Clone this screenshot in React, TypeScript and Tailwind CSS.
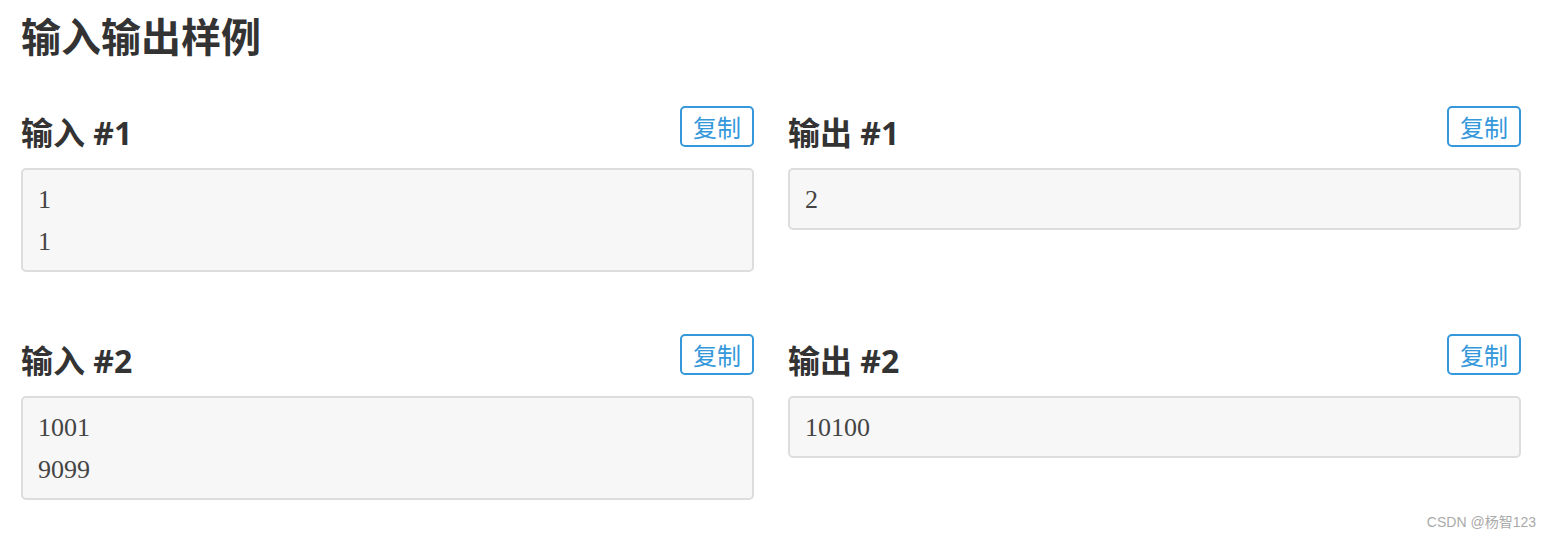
import React from "react";

interface Sample {
  label: string;
  lines: string[];
}

const rows: { input: Sample; output: Sample }[] = [
  { input: { label: "输入 #1", lines: ["1", "1"] }, output: { label: "输出 #1", lines: ["2"] } },
  { input: { label: "输入 #2", lines: ["1001", "9099"] }, output: { label: "输出 #2", lines: ["10100"] } },
];

function SampleBlock({ sample }: { sample: Sample }) {
  return (
    <div>
      <div className="flex h-[41px] items-start justify-between">
        <h3 className="mt-[7px] text-[32px] font-bold leading-[40px] text-[#333]">{sample.label}</h3>
        <button className="flex h-[41px] w-[74px] items-center justify-center rounded-[5px] border-2 border-[#3498db] bg-white pt-[2px] text-[24px] leading-none text-[#3498db]">
          复制
        </button>
      </div>
      <pre className="mt-[21px] rounded-[5px] border-2 border-[#dddddd] bg-[#f7f7f7] pb-[7px] pl-[15px] pt-[9px] font-['Liberation_Serif','Noto_Sans_CJK_SC',serif] text-[26px] leading-[42px] text-[#444]">
        {sample.lines.join("\n")}
      </pre>
    </div>
  );
}

export default function App() {
  return (
    <div className="relative h-[540px] w-[1551px] overflow-hidden bg-white font-['Open_Sans','Noto_Sans_CJK_SC',sans-serif]">
      <h2 className="ml-[21px] pt-[15px] font-['Noto_Sans_CJK_SC',sans-serif] text-[40px] font-bold leading-[40px] text-[#333]">
        输入输出样例
      </h2>

      <div className="ml-[21px] mt-[51px] grid w-[1500px] grid-cols-2 gap-x-[34px] gap-y-[62px]">
        {rows.map((r) => (
          <React.Fragment key={r.input.label}>
            <SampleBlock sample={r.input} />
            <SampleBlock sample={r.output} />
          </React.Fragment>
        ))}
      </div>

      {/* watermark */}
      <div className="absolute bottom-[7px] right-[15px] font-['Liberation_Sans','Noto_Sans_CJK_SC',sans-serif] text-[14px] text-[#aaa]">
        CSDN @杨智123
      </div>
    </div>
  );
}
